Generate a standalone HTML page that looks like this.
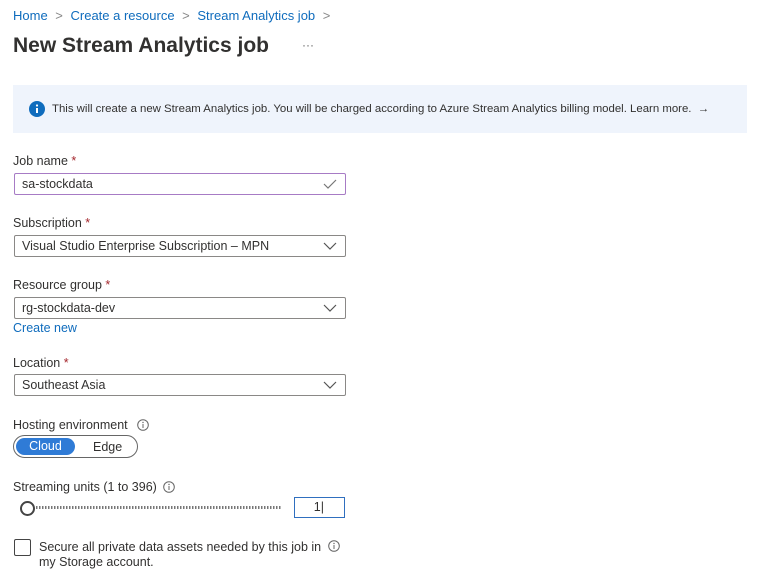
<!DOCTYPE html>
<html><head><style>
body{margin:0;width:768px;height:585px;background:#fff;font-family:"Liberation Sans",sans-serif;color:#323130;position:relative;overflow:hidden}
.a{position:absolute}
.lbl{font-size:12.5px;color:#323130}
.req{color:#a4262c}
.box{position:absolute;left:14px;width:323px;height:20px;border:1px solid #8a8886;border-radius:2px;font-size:12.5px;line-height:20px;padding-left:7px;box-sizing:content-box}
.chev{position:absolute;right:8px;top:4px}
</style></head><body>
<div class="a" style="left:13px;top:8px;font-size:13px;color:#0f6cbd">Home <span style="color:#888;margin:0 4px">&gt;</span> Create a resource <span style="color:#888;margin:0 4px">&gt;</span> Stream Analytics job <span style="color:#888;margin-left:4px">&gt;</span></div>
<div class="a" style="left:13px;top:34px;font-size:21px;font-weight:bold;color:#323130">New Stream Analytics job</div>
<div class="a" style="left:302px;top:38px;font-size:12px;color:#666">···</div>
<div class="a" style="left:13px;top:85px;width:734px;height:48px;background:#eff4fc"></div>
<svg class="a" style="left:29px;top:101px" width="16" height="16"><circle cx="8" cy="8" r="8" fill="#0f6cbd"/><rect x="7" y="7" width="2" height="5" fill="#fff"/><circle cx="8" cy="4.5" r="1.1" fill="#fff"/></svg>
<div class="a" style="left:52px;top:103px;font-size:11.4px;color:#323130">This will create a new Stream Analytics job. You will be charged according to Azure Stream Analytics billing model. Learn more. &nbsp;→</div>

<div class="a lbl" style="left:13px;top:154px">Job name <span class="req">*</span></div>
<div class="box" style="top:173px;border-color:#a77bc5">sa-stockdata<svg class="chev" width="14" height="12"><path d="M1 6l4 4 8-8" stroke="#777" fill="none" stroke-width="1.2"/></svg></div>

<div class="a lbl" style="left:13px;top:216px">Subscription <span class="req">*</span></div>
<div class="box" style="top:235px">Visual Studio Enterprise Subscription – MPN<svg class="chev" width="14" height="12"><path d="M1 3l6 6 6-6" stroke="#555" fill="none" stroke-width="1.2"/></svg></div>

<div class="a lbl" style="left:13px;top:278px">Resource group <span class="req">*</span></div>
<div class="box" style="top:297px">rg-stockdata-dev<svg class="chev" width="14" height="12"><path d="M1 3l6 6 6-6" stroke="#555" fill="none" stroke-width="1.2"/></svg></div>
<div class="a" style="left:13px;top:321px;font-size:12.5px;color:#0f6cbd">Create new</div>

<div class="a lbl" style="left:13px;top:356px">Location <span class="req">*</span></div>
<div class="box" style="top:374px">Southeast Asia<svg class="chev" width="14" height="12"><path d="M1 3l6 6 6-6" stroke="#555" fill="none" stroke-width="1.2"/></svg></div>

<div class="a lbl" style="left:13px;top:418px">Hosting environment</div>
<svg class="a" style="left:137px;top:419px" width="12" height="12"><circle cx="6" cy="6" r="5.3" fill="none" stroke="#666"/><path d="M6 5v4" stroke="#666"/><circle cx="6" cy="3.5" r=".7" fill="#666"/></svg>
<div class="a" style="left:13px;top:435px;width:123px;height:21px;border:1px solid #666;border-radius:12px"></div>
<div class="a" style="left:16px;top:438px;width:59px;height:17px;background:#2f7bd6;border-radius:9px;color:#fff;font-size:12.5px;text-align:center;line-height:17px">Cloud</div>
<div class="a" style="left:93px;top:440px;font-size:12.5px">Edge</div>

<div class="a lbl" style="left:13px;top:480px">Streaming units (1 to 396)</div>
<svg class="a" style="left:163px;top:481px" width="12" height="12"><circle cx="6" cy="6" r="5.3" fill="none" stroke="#666"/><path d="M6 5v4" stroke="#666"/><circle cx="6" cy="3.5" r=".7" fill="#666"/></svg>
<div class="a" style="left:30px;top:506px;width:252px;height:3px;background:repeating-linear-gradient(90deg,#777 0 1.5px,#fff 1.5px 3px)"></div>
<div class="a" style="left:20px;top:501px;width:11px;height:11px;border:2px solid #444;border-radius:50%;background:#fff"></div>
<div class="a" style="left:294px;top:497px;width:51px;height:21px;border:1.5px solid #2f6fbf;font-size:12.5px;line-height:19px;text-align:right;padding-right:20px;box-sizing:border-box">1|</div>

<div class="a" style="left:14px;top:539px;width:15px;height:15px;border:1px solid #444;border-radius:2px"></div>
<div class="a" style="left:39px;top:540px;font-size:12.5px;line-height:15px">Secure all private data assets needed by this job in<br>my Storage account.</div>
<svg class="a" style="left:328px;top:540px" width="12" height="12"><circle cx="6" cy="6" r="5.3" fill="none" stroke="#666"/><path d="M6 5v4" stroke="#666"/><circle cx="6" cy="3.5" r=".7" fill="#666"/></svg>
</body></html>
